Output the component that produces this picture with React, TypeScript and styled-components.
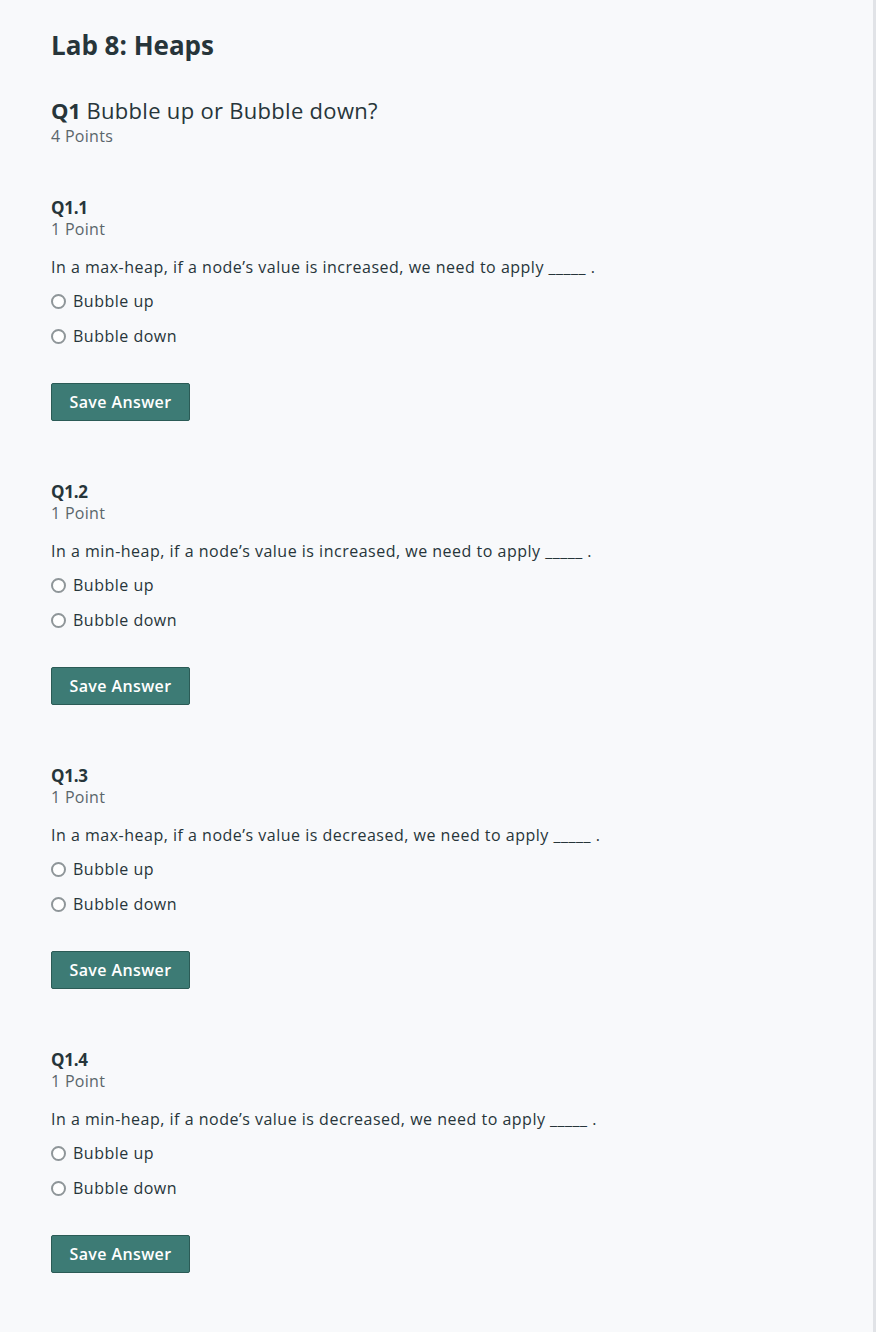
import React from 'react';
import styled, { createGlobalStyle } from 'styled-components';

const GlobalStyle = createGlobalStyle`
  html, body {
    margin: 0;
    padding: 0;
    background: #f8f9fb;
  }
  body {
    font-family: "Open Sans", Lato, Arial, sans-serif;
    color: #27353a;
  }
`;

const Page = styled.main`
  box-sizing: border-box;
  width: 876px;
  min-height: 1332px;
  padding: 29px 51px 60px;
  background: #f8f9fb;
  border-right: 3px solid #e1e3e7;
`;

const Title = styled.h1`
  margin: 0;
  font-size: 26px;
  line-height: 32px;
  font-weight: 700;
`;

const Group = styled.header`
  margin-top: 35px;
`;

const GroupTitle = styled.h2`
  margin: 0;
  font-size: 22px;
  line-height: 28px;
  font-weight: 400;
  letter-spacing: 0.3px;

  b {
    font-weight: 700;
    letter-spacing: -0.3px;
  }
`;

const Points = styled.div<{ $gap?: number }>`
  margin-top: ${(p) => p.$gap ?? 2}px;
  font-size: 16px;
  line-height: 20px;
  letter-spacing: 0.3px;
  color: #5b666b;
`;

const Question = styled.section<{ $first?: boolean }>`
  margin-top: ${(p) => (p.$first ? 51 : 60)}px;
`;

const QuestionTitle = styled.h3`
  margin: 0;
  font-size: 17px;
  line-height: 22px;
  font-weight: 700;
  letter-spacing: -0.3px;
`;

const Prompt = styled.p`
  margin: 17px 0 0;
  font-size: 16px;
  line-height: 22px;
  letter-spacing: 0.5px;
`;

const Options = styled.div`
  display: flex;
  flex-direction: column;
  gap: 13px;
  margin-top: 12px;
`;

const Option = styled.label`
  display: flex;
  align-items: center;
  gap: 7px;
  font-size: 16px;
  line-height: 22px;
  letter-spacing: 0.5px;
  cursor: pointer;
`;

const Radio = styled.input.attrs({ type: 'radio' })`
  appearance: none;
  box-sizing: border-box;
  width: 15px;
  height: 15px;
  margin: 0;
  border: 2px solid #8f9699;
  border-radius: 50%;
  background: #fff;
`;

const SaveButton = styled.button`
  box-sizing: border-box;
  margin-top: 36px;
  width: 139px;
  height: 38px;
  padding: 0;
  background: #3d7b75;
  border: 1px solid #2b5b56;
  border-radius: 2px;
  color: #fff;
  font-family: inherit;
  font-size: 16px;
  font-weight: 600;
  letter-spacing: 0.4px;
  cursor: pointer;
`;

const questions = [
  { id: 'Q1.1', heap: 'max-heap', change: 'increased' },
  { id: 'Q1.2', heap: 'min-heap', change: 'increased' },
  { id: 'Q1.3', heap: 'max-heap', change: 'decreased' },
  { id: 'Q1.4', heap: 'min-heap', change: 'decreased' },
];

const App: React.FC = () => (
  <>
    <GlobalStyle />
    <Page>
      <Title>Lab 8: Heaps</Title>
      <Group>
        <GroupTitle>
          <b>Q1</b> Bubble up or Bubble down?
        </GroupTitle>
        <Points>4 Points</Points>
      </Group>
      {questions.map((q, idx) => (
        <Question key={q.id} $first={idx === 0}>
          <QuestionTitle>{q.id}</QuestionTitle>
          <Points $gap={0}>1 Point</Points>
          <Prompt>
            In a {q.heap}, if a node’s value is {q.change}, we need to apply _____ .
          </Prompt>
          <Options>
            <Option>
              <Radio name={q.id} value="up" />
              Bubble up
            </Option>
            <Option>
              <Radio name={q.id} value="down" />
              Bubble down
            </Option>
          </Options>
          <SaveButton>Save Answer</SaveButton>
        </Question>
      ))}
    </Page>
  </>
);

export default App;
